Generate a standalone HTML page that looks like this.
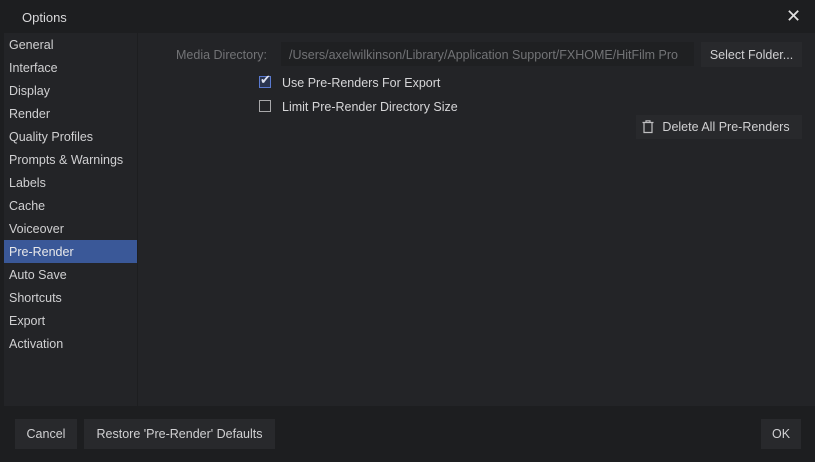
<!DOCTYPE html>
<html><head><meta charset="utf-8"><style>
*{margin:0;padding:0;box-sizing:border-box}
body{width:815px;height:462px;background:#1d1e20;font-family:"Liberation Sans",sans-serif;font-size:12.5px;color:#d6d6d8;position:relative;overflow:hidden}
.a{position:absolute}
.side{left:4px;top:33px;width:133px;height:373px;background:#232427}
.main{left:138px;top:33px;width:677px;height:373px;background:#232427}
.item{position:absolute;left:0;width:133px;height:23px;line-height:25px;padding-left:5px;color:#d0d0d2}
.sel{background:#3a5898;color:#e8e8ea}
.btn{position:absolute;background:#28292c;color:#d0d0d2;text-align:center;line-height:30px;height:30px}
.cb{position:absolute;width:12px;height:12px;border:1px solid #a8a8aa}
</style></head><body>
<div class="a" style="left:22px;top:10px;font-size:13px;color:#d8d8da">Options</div>
<div class="a" style="left:786px;top:6px;font-size:18px;color:#e0e0e0">✕</div>
<div class="a side">
<div class="item" style="top:0">General</div>
<div class="item" style="top:23px">Interface</div>
<div class="item" style="top:46px">Display</div>
<div class="item" style="top:69px">Render</div>
<div class="item" style="top:92px">Quality Profiles</div>
<div class="item" style="top:115px">Prompts &amp; Warnings</div>
<div class="item" style="top:138px">Labels</div>
<div class="item" style="top:161px">Cache</div>
<div class="item" style="top:184px">Voiceover</div>
<div class="item sel" style="top:207px">Pre-Render</div>
<div class="item" style="top:230px">Auto Save</div>
<div class="item" style="top:253px">Shortcuts</div>
<div class="item" style="top:276px">Export</div>
<div class="item" style="top:299px">Activation</div>
</div>
<div class="a main"></div>
<div class="a" style="left:176px;top:48px;color:#727376">Media Directory:</div>
<div class="a" style="left:281px;top:42px;width:413px;height:24px;background:#1f2022;color:#727376;line-height:26px;padding-left:8px;overflow:hidden;white-space:nowrap">/Users/axelwilkinson/Library/Application Support/FXHOME/HitFilm Pro</div>
<div class="btn" style="left:701px;top:42px;width:101px;height:25px;line-height:26px">Select Folder...</div>
<div class="cb" style="left:259px;top:76px;background:#2a3550;border-color:#5a7ad0"></div>
<div class="a" style="left:260px;top:72px;font-size:13px;color:#e0e4f0">✔</div>
<div class="a" style="left:282px;top:76px">Use Pre-Renders For Export</div>
<div class="cb" style="left:259px;top:100px"></div>
<div class="a" style="left:282px;top:100px">Limit Pre-Render Directory Size</div>
<div class="btn" style="left:636px;top:115px;width:166px;height:24px;line-height:25px;padding-left:14px">Delete All Pre-Renders</div>
<svg class="a" style="left:641px;top:119px" width="14" height="15" viewBox="0 0 14 15"><path d="M1.5 3.5h11M5 3.5V1.8h4v1.7M3 3.5v10h8v-10" fill="none" stroke="#c0c0c2" stroke-width="1.2"/></svg>
<div class="btn" style="left:15px;top:419px;width:62px;line-height:31px">Cancel</div>
<div class="btn" style="left:84px;top:419px;width:191px;line-height:31px">Restore 'Pre-Render' Defaults</div>
<div class="btn" style="left:761px;top:419px;width:40px;line-height:31px">OK</div>
</body></html>
